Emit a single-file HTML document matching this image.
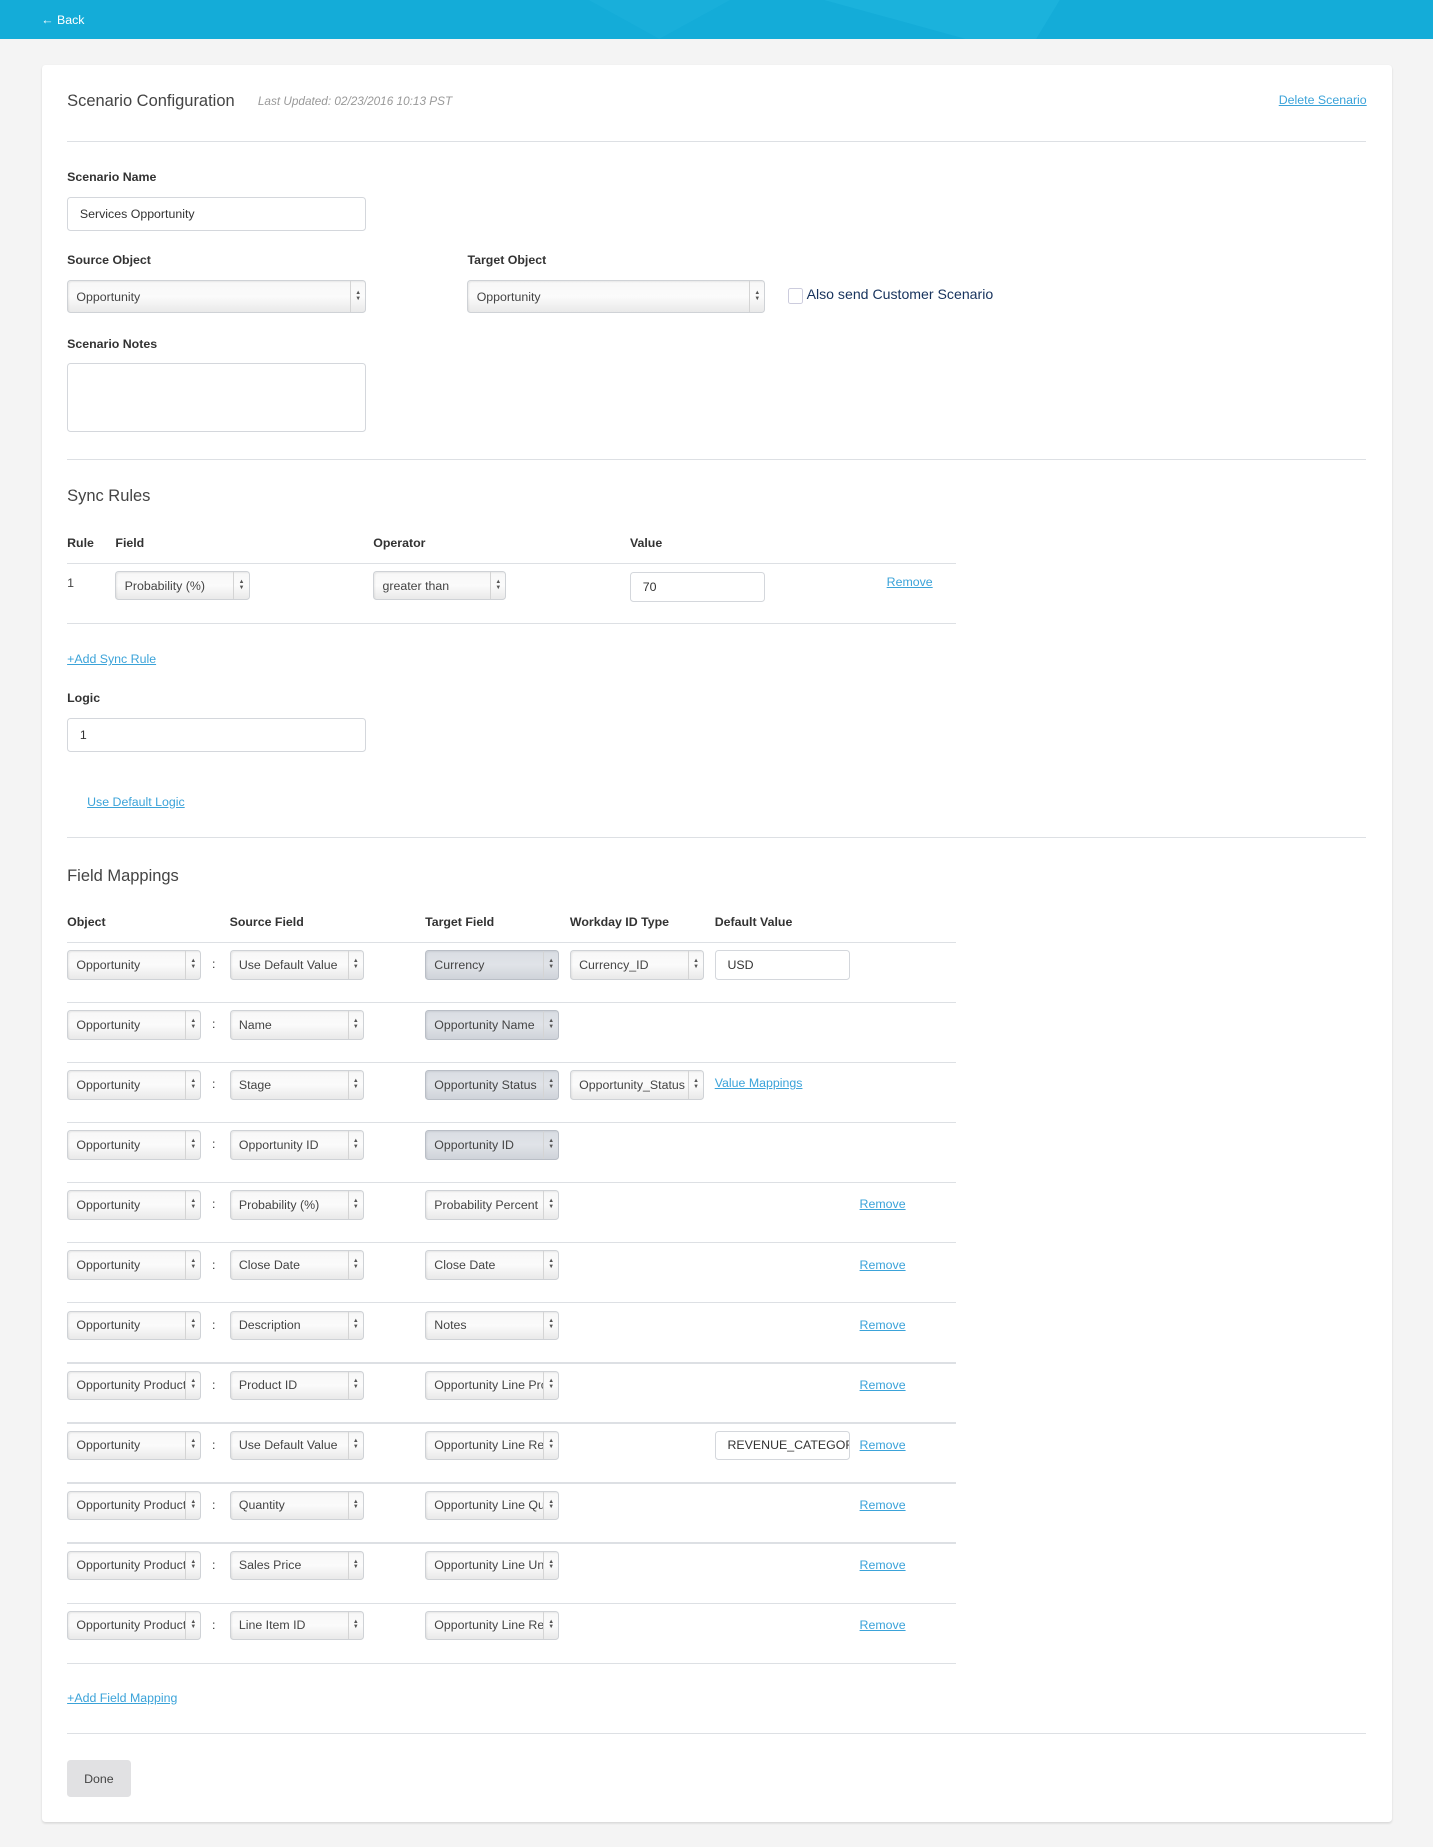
<!DOCTYPE html>
<html><head><meta charset="utf-8">
<style>
html,body{margin:0;padding:0}
body{width:1217px;height:1568px;background:#f4f4f4;font-family:"Liberation Sans",sans-serif;position:relative;overflow:hidden;zoom:1.17748;color:#333}
.a{position:absolute}
.hdr{left:0;top:0;width:1217px;height:33px;background:#14acd8;overflow:hidden}
.card{left:36px;top:55px;width:1146px;height:1492px;background:#fff;border-radius:3px;box-shadow:0 1px 2px rgba(0,0,0,.12)}
.lbl{font-size:10.5px;font-weight:bold;color:#333}
.lnk{font-size:10.5px;color:#3ba3d9;text-decoration:underline}
.hr{height:1px;background:#dde0e4}
.inp{border:1px solid #d4d7dc;border-radius:3px;background:#fff;box-sizing:border-box;font-size:10.5px;color:#333;padding-left:10px;display:flex;align-items:center}
.sel{border:1px solid #cfd2d6;border-radius:3px;box-sizing:border-box;background:linear-gradient(#f7f7f7,#fbfbfb 50%,#e9e9e9);font-size:10.5px;color:#444;padding-left:7px;display:flex;align-items:center;overflow:hidden;white-space:nowrap;box-shadow:inset 1px 1px 1px rgba(0,0,0,.06)}
.sel.b{background:linear-gradient(#d9dde3,#e0e3e8 50%,#cfd3da);border-color:#b9bec6}
.sel span.t{flex:1;overflow:hidden}
.sel span.ar{width:12px;height:100%;border-left:1px solid #d4d4d4;display:flex;align-items:center;justify-content:center;font-size:5px;line-height:5px;color:#555;flex-direction:column}
.sel span.ar i{font-style:normal;display:block}
.h2{font-size:14px;color:#444}
</style></head><body>
<div class="a hdr">
<svg class="a" style="left:0;top:0" width="1217" height="33"><polygon points="700,0 900,0 880,33 820,33" fill="#1fb6e0" opacity=".6"/><polygon points="500,0 620,0 560,33" fill="#20b3de" opacity=".4"/></svg>
<div class="a" style="left:35px;top:11px;color:#fff;font-size:10.5px">&#8592; Back</div>
</div>
<div class="a card"></div>
<div class="a h2" style="left:57px;top:78px">Scenario Configuration</div>
<div class="a" style="left:219px;top:81px;font-size:10px;font-style:italic;color:#999">Last Updated: 02/23/2016 10:13 PST</div>
<div class="a lnk" style="left:1086px;top:79px">Delete Scenario</div>
<div class="a hr" style="left:57px;top:120px;width:1103px"></div>

<div class="a lbl" style="left:57px;top:144px">Scenario Name</div>
<div class="a inp" style="left:57px;top:167px;width:254px;height:29px">Services Opportunity</div>
<div class="a lbl" style="left:57px;top:215px">Source Object</div>
<div class="a sel" style="left:57px;top:238px;width:254px;height:28px"><span class="t">Opportunity</span><span class="ar"><i>▲</i><i>▼</i></span></div>
<div class="a lbl" style="left:397px;top:215px">Target Object</div>
<div class="a sel" style="left:397px;top:238px;width:253px;height:28px"><span class="t">Opportunity</span><span class="ar"><i>▲</i><i>▼</i></span></div>
<div class="a" style="left:669px;top:245px;width:13px;height:13px;border:1px solid #ccd;border-radius:2px;box-sizing:border-box"></div>
<div class="a" style="left:685px;top:243px;font-size:12px;color:#16325c">Also send Customer Scenario</div>
<div class="a lbl" style="left:57px;top:286px">Scenario Notes</div>
<div class="a inp" style="left:57px;top:308px;width:254px;height:59px"></div>
<div class="a hr" style="left:57px;top:390px;width:1103px"></div>

<div class="a h2" style="left:57px;top:414px">Sync Rules</div>
<div class="a lbl" style="left:57px;top:455px">Rule</div>
<div class="a lbl" style="left:98px;top:455px">Field</div>
<div class="a lbl" style="left:317px;top:455px">Operator</div>
<div class="a lbl" style="left:535px;top:455px">Value</div>
<div class="a hr" style="left:57px;top:478px;width:755px"></div>
<div class="a" style="left:57px;top:489px;font-size:10.5px;color:#444">1</div>
<div class="a sel" style="left:98px;top:485px;width:114px;height:25px"><span class="t">Probability (%)</span><span class="ar"><i>▲</i><i>▼</i></span></div>
<div class="a sel" style="left:317px;top:485px;width:113px;height:25px"><span class="t">greater than</span><span class="ar"><i>▲</i><i>▼</i></span></div>
<div class="a inp" style="left:535px;top:486px;width:115px;height:25px">70</div>
<div class="a lnk" style="left:753px;top:488px">Remove</div>
<div class="a hr" style="left:57px;top:529px;width:755px"></div>
<div class="a lnk" style="left:57px;top:554px">+Add Sync Rule</div>
<div class="a lbl" style="left:57px;top:587px">Logic</div>
<div class="a inp" style="left:57px;top:610px;width:254px;height:29px">1</div>
<div class="a lnk" style="left:74px;top:675px">Use Default Logic</div>
<div class="a hr" style="left:57px;top:711px;width:1103px"></div>

<div class="a h2" style="left:57px;top:736px">Field Mappings</div>
<div class="a lbl" style="left:57px;top:777px">Object</div>
<div class="a lbl" style="left:195px;top:777px">Source Field</div>
<div class="a lbl" style="left:361px;top:777px">Target Field</div>
<div class="a lbl" style="left:484px;top:777px">Workday ID Type</div>
<div class="a lbl" style="left:607px;top:777px">Default Value</div>
<div class="a hr" style="left:57px;top:800px;width:755px"></div>

<div id="rows"></div>
<script>
var R=[
["Opportunity","Use Default Value","Currency",1,"Currency_ID","USD",0,0],
["Opportunity","Name","Opportunity Name",1,null,null,0,0],
["Opportunity","Stage","Opportunity Status",1,"Opportunity_Status",null,1,0],
["Opportunity","Opportunity ID","Opportunity ID",1,null,null,0,0],
["Opportunity","Probability (%)","Probability Percent",0,null,null,0,1],
["Opportunity","Close Date","Close Date",0,null,null,0,1],
["Opportunity","Description","Notes",0,null,null,0,1],
["Opportunity Product","Product ID","Opportunity Line Product",0,null,null,0,1],
["Opportunity","Use Default Value","Opportunity Line Rev",0,null,"REVENUE_CATEGORY",0,1],
["Opportunity Product","Quantity","Opportunity Line Quantity",0,null,null,0,1],
["Opportunity Product","Sales Price","Opportunity Line Unit",0,null,null,0,1],
["Opportunity Product","Line Item ID","Opportunity Line Ref",0,null,null,0,1]];
var h="";
function s(x,y,t,b){return '<div class="a sel'+(b?' b':'')+'" style="left:'+x+'px;top:'+y+'px;width:114px;height:25px"><span class="t">'+t+'</span><span class="ar"><i>▲</i><i>▼</i></span></div>';}
R.forEach(function(r,i){var y=807+i*51;
h+=s(57,y,r[0])+'<div class="a" style="left:180px;top:'+(y+6)+'px;font-size:10.5px">:</div>'+s(195,y,r[1])+s(361,y,r[2],r[3]);
if(r[4])h+=s(484,y,r[4]);
if(r[5])h+='<div class="a inp" style="left:607px;top:'+y+'px;width:115px;height:25px;overflow:hidden;white-space:nowrap">'+r[5]+'</div>';
if(r[6])h+='<div class="a lnk" style="left:607px;top:'+(y+5)+'px">Value Mappings</div>';
if(r[7])h+='<div class="a lnk" style="left:730px;top:'+(y+6)+'px">Remove</div>';
h+='<div class="a hr" style="left:57px;top:'+(y+44)+'px;width:755px"></div>';});
document.getElementById("rows").innerHTML=h;
</script>
<div class="a lnk" style="left:57px;top:1436px">+Add Field Mapping</div>
<div class="a hr" style="left:57px;top:1472px;width:1103px"></div>
<div class="a" style="left:57px;top:1495px;width:54px;height:31px;background:#e1e1e3;border-radius:3px;font-size:10.5px;color:#444;display:flex;align-items:center;justify-content:center">Done</div>
</body></html>
